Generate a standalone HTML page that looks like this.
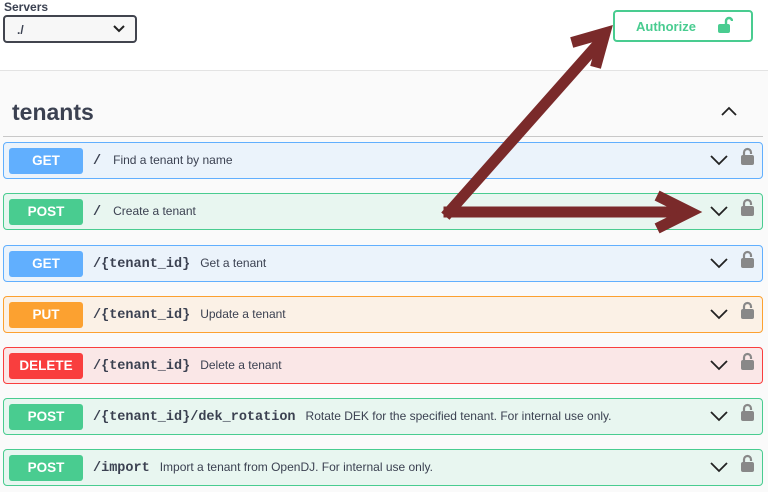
<!DOCTYPE html>
<html><head><style>
*{box-sizing:border-box;margin:0;padding:0}
body{width:768px;height:492px;overflow:hidden;background:#fafafa;font-family:"Liberation Sans",sans-serif;color:#3b4151;position:relative}
.top{position:absolute;left:0;top:0;width:768px;height:71px;background:#fff;border-bottom:1px solid #e3e3e3}
.lbl{position:absolute;left:4px;top:0px;font-size:12px;font-weight:bold;color:#3b4151}
.sel{position:absolute;left:3px;top:15px;width:134px;height:28px;border:2px solid #41444e;border-radius:4px;background:#f7f7f7;font-size:12px;font-weight:bold;padding:6px 0 0 12px}
.auth{position:absolute;left:613px;top:10px;width:140px;height:32px;border:2px solid #49cc90;border-radius:4px;color:#49cc90;font-weight:bold;font-size:13px;padding:7px 0 0 21px}
h2{position:absolute;left:12px;top:99px;font-size:23px;font-weight:bold;color:#3b4151}
.hr{position:absolute;left:3px;top:136px;width:760px;height:1px;background:#c8c8c8}
.row{position:absolute;left:3px;width:760px;height:37px;border:1px solid;border-radius:4px}
.b{position:absolute;left:5px;top:5px;width:74px;height:26px;border-radius:3px;color:#fff;font-weight:bold;font-size:13.5px;text-align:center;line-height:26px}
.p{position:absolute;left:89px;top:10px;font-family:"Liberation Mono",monospace;font-weight:bold;font-size:13.5px;color:#3b4151;white-space:nowrap}
.p span{font-family:"Liberation Sans",sans-serif;font-weight:normal;font-size:12px;margin-left:10px}
.get{background:#ebf3fb;border-color:#61affe}.get .b{background:#61affe}
.post{background:#e8f6f0;border-color:#49cc90}.post .b{background:#49cc90}
.put{background:#fbf1e6;border-color:#fca130}.put .b{background:#fca130}
.del{background:#fae7e7;border-color:#f93e3e}.del .b{background:#f93e3e}
</style></head><body>
<div class="top">
<div class="lbl">Servers</div>
<div class="sel">./<svg style="position:absolute;left:108px;top:8px" width="12" height="8" viewBox="0 0 12 8"><path d="M1 1l5 5 5-5" stroke="#222" stroke-width="2" fill="none"/></svg></div>
<div class="auth">Authorize<svg style="position:absolute;left:102px;top:4px" width="16" height="18" viewBox="0 0 16 18"><path d="M9 8V5a3 3 0 0 1 6 0" stroke="#49cc90" stroke-width="2.4" fill="none"/><rect x="1" y="8" width="12" height="9" rx="2" fill="#49cc90"/></svg></div>
</div>
<h2>tenants</h2>
<svg style="position:absolute;left:720px;top:105px" width="18" height="12" viewBox="0 0 18 12"><path d="M2 10l7-7 7 7" stroke="#222" stroke-width="1.8" fill="none"/></svg>
<div class="hr"></div>

<div class="row get" style="top:142px"><div class="b">GET</div><div class="p">/<span style="margin-left:12px">Find a tenant by name</span></div></div>
<div class="row post" style="top:193px"><div class="b">POST</div><div class="p">/<span style="margin-left:12px">Create a tenant</span></div></div>
<div class="row get" style="top:245px"><div class="b">GET</div><div class="p">/{tenant_id}<span>Get a tenant</span></div></div>
<div class="row put" style="top:296px"><div class="b">PUT</div><div class="p">/{tenant_id}<span>Update a tenant</span></div></div>
<div class="row del" style="top:347px"><div class="b">DELETE</div><div class="p">/{tenant_id}<span>Delete a tenant</span></div></div>
<div class="row post" style="top:398px"><div class="b">POST</div><div class="p">/{tenant_id}/dek_rotation<span>Rotate DEK for the specified tenant. For internal use only.</span></div></div>
<div class="row post" style="top:449px"><div class="b">POST</div><div class="p">/import<span>Import a tenant from OpenDJ. For internal use only.</span></div></div>

<svg style="position:absolute;left:0;top:0" width="768" height="492">
<defs><g id="ic"><path d="M0 0l8 8 8-8" stroke="#222" stroke-width="1.8" fill="none"/></g>
<g id="lk"><path d="M3 7V4.5a3.5 3.5 0 0 1 7 0V6" stroke="#888" stroke-width="2.2" fill="none"/><rect x="0" y="7" width="13" height="10" rx="2" fill="#888"/></g></defs>
<use href="#ic" x="711" y="156"/><use href="#lk" x="741" y="148"/>
<use href="#ic" x="711" y="207"/><use href="#lk" x="741" y="199"/>
<use href="#ic" x="711" y="259"/><use href="#lk" x="741" y="251"/>
<use href="#ic" x="711" y="310"/><use href="#lk" x="741" y="302"/>
<use href="#ic" x="711" y="361"/><use href="#lk" x="741" y="353"/>
<use href="#ic" x="711" y="412"/><use href="#lk" x="741" y="404"/>
<use href="#ic" x="711" y="463"/><use href="#lk" x="741" y="455"/>
<g stroke="#7a2a2a" stroke-width="11" fill="none" stroke-linecap="square">
<path d="M449 212L598 44"/>
<path d="M449 212H680"/>
<path d="M577 41L605 33 597 62" stroke-linejoin="miter"/>
<path d="M662 198L690 212 662 226" stroke-linejoin="miter"/>
</g>
</svg>
</body></html>
